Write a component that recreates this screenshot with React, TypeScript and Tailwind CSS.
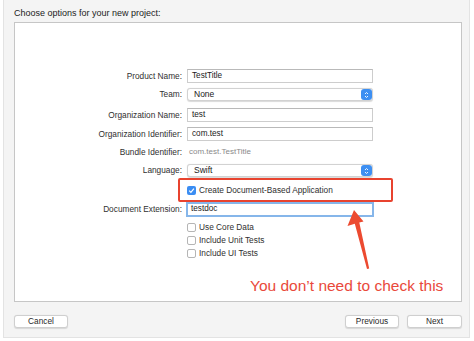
import React from 'react';

const font = { fontFamily: '"Liberation Sans", Arial, sans-serif' };

const Label: React.FC<{ text?: string }> = ({ text }) => (
  <div className="w-[167px] shrink-0 text-right text-[8.3px] leading-none text-[#2f2f2f]">{text}</div>
);

const TextField: React.FC<{ value: string; focused?: boolean }> = ({ value, focused }) => (
  <div
    className={
      focused
        ? 'ml-[4px] flex h-[15px] w-[188px] items-center border-2 border-[#86b6ea] bg-white pl-[3px] text-[8.2px] text-[#1a1a1a]'
        : 'ml-[5px] flex h-full w-[186px] items-center border border-[#cdcdcd] border-t-[#b9b9b9] bg-white pl-[4px] text-[8.2px] text-[#1a1a1a]'
    }
  >
    {value}
  </div>
);

const Popup: React.FC<{ value: string }> = ({ value }) => (
  <div className="ml-[5px] flex h-full w-[186px] items-center rounded-[3px] border border-[#d2d2d2] bg-white shadow-[0_0.5px_1px_rgba(0,0,0,0.15)]">
    <span className="flex-1 pl-[6px] text-[8.5px] text-[#1a1a1a]">{value}</span>
    <span className="flex h-full w-[11px] flex-col items-center justify-center rounded-[3px] bg-[#3d8ff2]">
      <svg width="5" height="8" viewBox="0 0 5 8" fill="none" stroke="white" strokeWidth="0.9">
        <path d="M1 3 L2.5 1.5 L4 3" />
        <path d="M1 5 L2.5 6.5 L4 5" />
      </svg>
    </span>
  </div>
);

const Check: React.FC<{ label: string; checked?: boolean }> = ({ label, checked }) => (
  <div className="flex h-full items-center">
    <Label />
    {checked ? (
      <span className="ml-[5px] flex h-[9px] w-[9px] items-center justify-center rounded-[2px] bg-[#3a8df3]">
        <svg width="7" height="7" viewBox="0 0 7 7" fill="none" stroke="white" strokeWidth="1.2">
          <path d="M1.2 3.6 L2.9 5.3 L5.9 1.6" />
        </svg>
      </span>
    ) : (
      <span className="ml-[5px] h-[9px] w-[9px] rounded-[2px] border border-[#b5b5b5] bg-white" />
    )}
    <span className="ml-[3px] text-[8.3px] leading-none text-[#2f2f2f]">{label}</span>
  </div>
);

const Button: React.FC<{ text: string; className?: string }> = ({ text, className }) => (
  <div
    className={`flex h-[13px] items-center justify-center rounded-[3px] border border-[#cfcfcf] bg-white text-[8.3px] text-[#2a2a2a] shadow-[0_0.5px_1px_rgba(0,0,0,0.12)] ${className ?? ''}`}
  >
    {text}
  </div>
);

export default function App() {
  return (
    <div className="h-[341px] w-[474px] bg-white" style={font}>
      <div className="ml-[3px] flex h-[338px] w-[467px] flex-col border-x border-b border-[#e3e3e3] bg-[#f4f4f4]">
        <div className="ml-[10px] mt-[8px] text-[9px] leading-[11px] text-[#222]">Choose options for your new project:</div>

        {/* Options panel */}
        <div className="relative ml-[10px] mt-[3px] flex h-[280px] w-[448px] flex-col border border-[#c6c6c6] bg-white">
          <div className="mt-[46px] flex h-[14px] items-center">
            <Label text="Product Name:" />
            <TextField value="TestTitle" />
          </div>
          <div className="mt-[5px] flex h-[13px] items-center">
            <Label text="Team:" />
            <Popup value="None" />
          </div>
          <div className="mt-[7px] flex h-[14px] items-center">
            <Label text="Organization Name:" />
            <TextField value="test" />
          </div>
          <div className="mt-[5px] flex h-[14px] items-center">
            <Label text="Organization Identifier:" />
            <TextField value="com.test" />
          </div>
          <div className="mt-[5px] flex h-[12px] items-center">
            <Label text="Bundle Identifier:" />
            <span className="ml-[7px] text-[8px] text-[#8a8a8a]">com.test.TestTitle</span>
          </div>
          <div className="mt-[6px] flex h-[13px] items-center">
            <Label text="Language:" />
            <Popup value="Swift" />
          </div>
          <div className="mt-[7px] h-[13px]">
            <Check label="Create Document-Based Application" checked />
          </div>
          <div className="mt-[5px] flex h-[14px] items-center">
            <Label text="Document Extension:" />
            <TextField value="testdoc" focused />
          </div>
          <div className="mt-[5px] h-[12px]">
            <Check label="Use Core Data" />
          </div>
          <div className="mt-[1px] h-[12px]">
            <Check label="Include Unit Tests" />
          </div>
          <div className="mt-[1px] h-[12px]">
            <Check label="Include UI Tests" />
          </div>

          {/* Annotation */}
          <div className="absolute left-[163px] top-[155px] h-[24px] w-[215px] rounded-[2px] border-2 border-[#e8432f]" />
          <svg className="absolute left-0 top-0" width="448" height="280" viewBox="13 22 448 280">
            <polygon
              points="352,209 345.5,225 352.8,222.8 365,268 367.2,267.4 357.3,221.4 361.5,220.5"
              fill="#ec4a30"
            />
          </svg>
          <div className="absolute left-[235px] top-[255px] text-[15.5px] leading-none text-[#e9493b]">
            You don’t need to check this
          </div>
        </div>

        <div className="ml-[10px] mt-[13px] flex w-[448px]">
          <Button text="Cancel" className="w-[54px]" />
          <div className="flex-1" />
          <Button text="Previous" className="w-[54px]" />
          <Button text="Next" className="ml-[8px] w-[55px]" />
        </div>
      </div>
    </div>
  );
}
